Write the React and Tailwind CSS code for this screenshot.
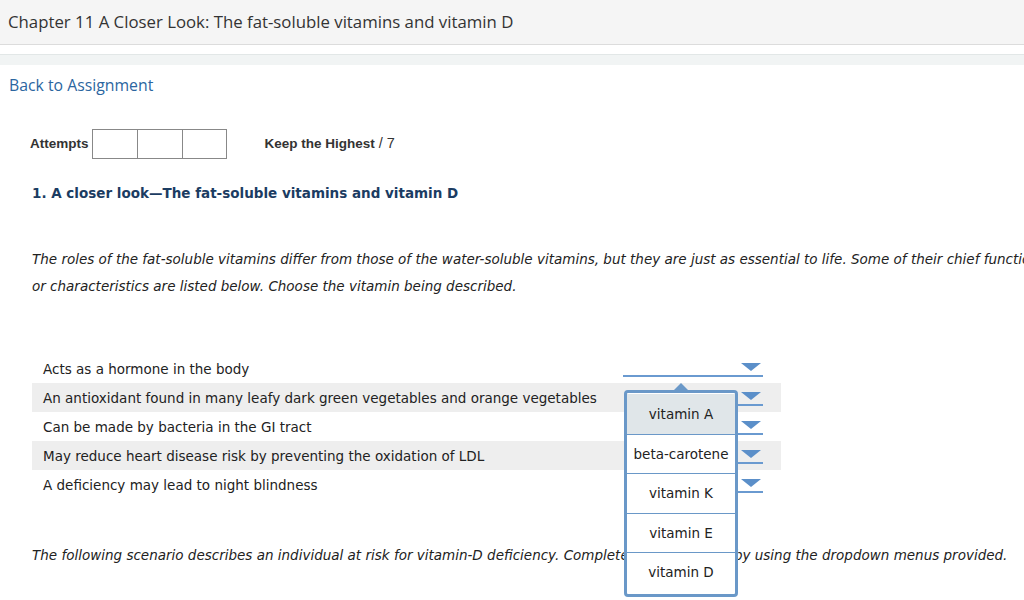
import React from "react";

const rows = [
  "Acts as a hormone in the body",
  "An antioxidant found in many leafy dark green vegetables and orange vegetables",
  "Can be made by bacteria in the GI tract",
  "May reduce heart disease risk by preventing the oxidation of LDL",
  "A deficiency may lead to night blindness",
];

const options = ["vitamin A", "beta-carotene", "vitamin K", "vitamin E", "vitamin D"];

const verdana = "font-['Verdana','DejaVu_Sans',sans-serif]";

const Arrow = () => (
  <svg width="20" height="8" viewBox="0 0 20 8" className="absolute right-[2px] top-[9px]">
    <polygon points="0,0 20,0 10,8" fill="#5b8fc9" />
  </svg>
);

const Popup = () => (
  <div className="absolute left-[1px] top-[36px] z-10 w-[114px]">
    {/* caret */}
    <svg width="16" height="8" viewBox="0 0 16 8" className="absolute left-[49px] -top-[7px]">
      <polygon points="0,8 8,0 16,8" fill="#6a98c8" />
    </svg>
    <div className="bg-white border-[3px] border-[#6a98c8] rounded-[4px] overflow-hidden pb-[2px]">
      {options.map((o, i) => (
        <div
          key={o}
          className={`h-[39.5px] flex items-center justify-center text-[13.5px] text-[#222] ${
            i === 0 ? "bg-[#e0e6e9] mt-[1px]" : "bg-white border-t border-[#6a98c8]"
          }`}
        >
          {o}
        </div>
      ))}
    </div>
  </div>
);

export default function App() {
  return (
    <div className="w-[1024px] h-[600px] overflow-hidden bg-white">
      <header className="h-[45px] bg-[#f5f5f5] border-b border-[#dcdcdc] flex items-center px-[8px]">
        <h1 className="font-['Open_Sans',sans-serif] text-[16.8px] text-[#333]">
          Chapter 11 A Closer Look: The fat-soluble vitamins and vitamin D
        </h1>
      </header>
      <div className="h-[9px]" />
      <div className="h-[11px] bg-[#f1f4f4] border-t border-[#e2e7e7]" />

      <div className="pl-[9px] pt-[8px]">
        <a className="font-['Open_Sans',sans-serif] text-[15.8px] leading-[24px] text-[#2b669f]">
          Back to Assignment
        </a>
      </div>

      <div className="pl-[30px] mt-[32px] flex items-center font-['Liberation_Sans',Arial,sans-serif] text-[13.5px] text-[#333]">
        <span className="font-bold mr-[3px]">Attempts</span>
        <div className="flex border border-[#888]">
          <div className="w-[45px] h-[28px] border-r border-[#888]" />
          <div className="w-[45px] h-[28px] border-r border-[#888]" />
          <div className="w-[43px] h-[28px]" />
        </div>
        <span className="ml-[38px] font-bold">Keep the Highest</span>
        <span className="ml-[4px] text-[14.5px]">/ 7</span>
      </div>

      <div className={`pl-[32px] ${verdana}`}>
        <h2 className="mt-[24px] text-[13.5px] font-bold text-[#1b3c62]">
          1. A closer look—The fat-soluble vitamins and vitamin D
        </h2>

        <p className="mt-[43px] text-[13.5px] leading-[27px] italic text-[#222] whitespace-nowrap">
          The roles of the fat-soluble vitamins differ from those of the water-soluble vitamins, but they are just as essential to life. Some of their chief functions
          <br />
          or characteristics are listed below. Choose the vitamin being described.
        </p>

        <div className="mt-[54px] w-[749px] text-[13.5px] text-[#222]">
          {rows.map((r, i) => (
            <div
              key={r}
              className={`h-[29px] flex items-center ${i % 2 === 1 ? "bg-[#eeeeee]" : ""}`}
            >
              <div className="pl-[11px] flex-1 whitespace-nowrap">{r}</div>
              <div className="relative w-[140px] h-full mr-[18px] shrink-0">
                {i === 0 ? (
                  <div className="absolute left-0 right-0 top-[21px] h-[2px] bg-[#6a9ad0]" />
                ) : (
                  <div className="absolute left-[114px] right-0 top-[21px] h-[2px] bg-[#6a9ad0]" />
                )}
                <Arrow />
                {i === 0 && <Popup />}
              </div>
            </div>
          ))}
        </div>

        <p className="mt-[46px] text-[13.5px] italic text-[#222] whitespace-nowrap">
          The following scenario describes an individual at risk for vitamin-D deficiency. Complete the paragraph by using the dropdown menus provided.
        </p>
      </div>
    </div>
  );
}
